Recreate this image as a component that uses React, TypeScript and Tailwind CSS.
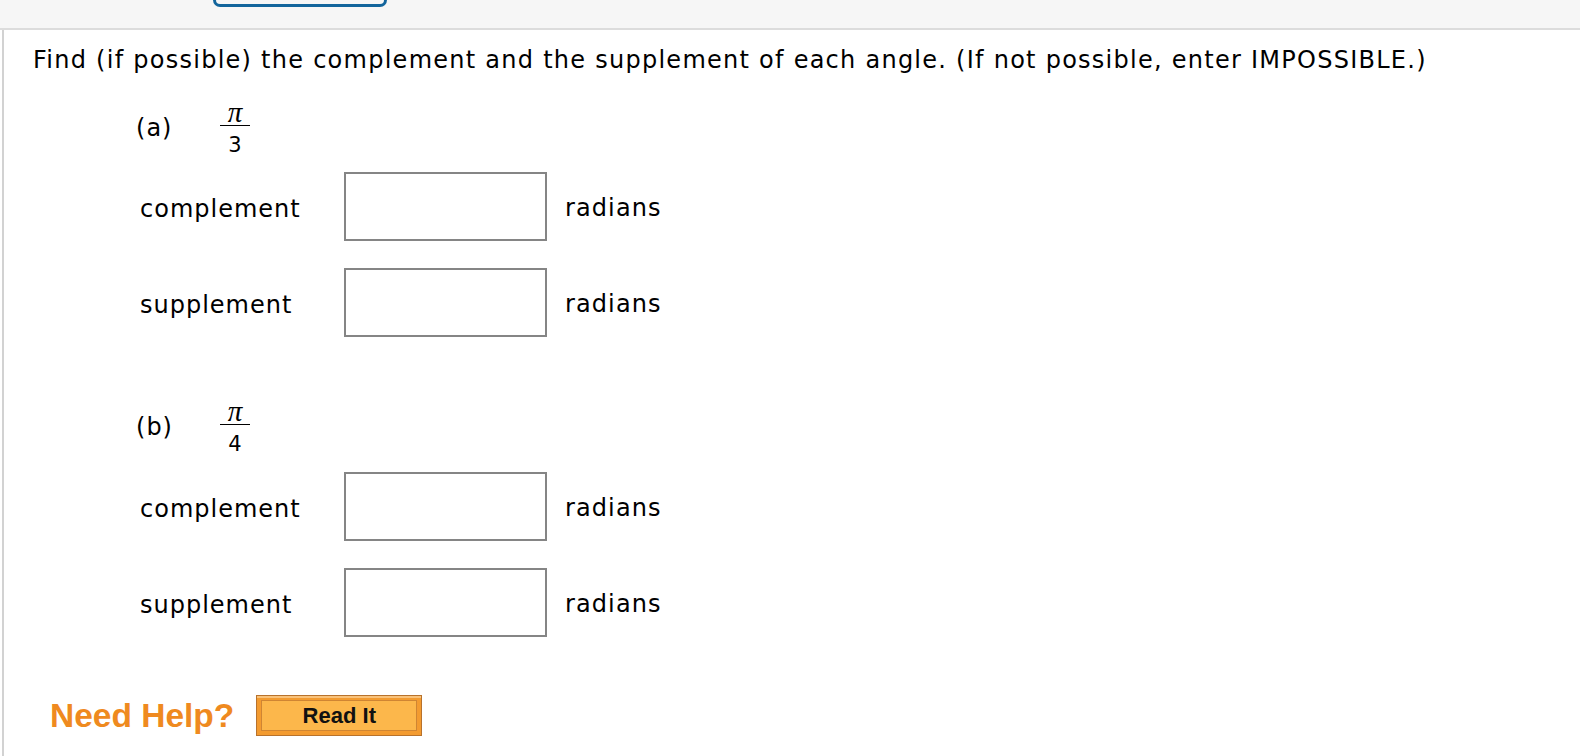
import React from "react";

const sans = { fontFamily: '"DejaVu Sans", Verdana, sans-serif' };

function Fraction({ d }: { d: string }) {
  return (
    <div className="flex flex-col items-center w-[30px]">
      <div
        className="text-[29px] leading-[24px] italic text-black pb-[1px] w-full text-center border-b-[1.5px] border-black"
        style={{ fontFamily: '"Liberation Serif", "Times New Roman", serif' }}
      >
        π
      </div>
      <div className="text-[21px] leading-[20px] pt-[9px] text-black">{d}</div>
    </div>
  );
}

function Row({ label }: { label: string }) {
  return (
    <div className="flex items-center h-[69px]">
      <div className="w-[204px] pl-[107px] box-content text-[24px] leading-[29px] tracking-[1px] pt-[6px] text-black">
        {label}
      </div>
      <div className="w-[203px] h-[69px] border-2 border-[#858585] bg-white" />
      <div className="ml-[18px] text-[24px] leading-[29px] tracking-[1.1px] pt-[3px] text-black">radians</div>
    </div>
  );
}

function Part({ letter, d, gap }: { letter: string; d: string; gap: string }) {
  return (
    <div>
      <div className="flex items-center h-[50px] pl-[103px]">
        <div className="text-[24px] leading-[29px] tracking-[1px] w-[84px] pt-[2px] text-black">({letter})</div>
        <Fraction d={d} />
      </div>
      <div className={gap}>
        <Row label="complement" />
      </div>
      <div className="mt-[27px]">
        <Row label="supplement" />
      </div>
    </div>
  );
}

export default function App() {
  return (
    <div className="w-[1580px] h-[756px] bg-white overflow-hidden" style={sans}>
      <div className="h-[30px] bg-[#f6f6f6] border-b-2 border-[#dcdcdc] flex items-start">
        <div className="ml-[213px] w-[174px] h-[7px] border-[3px] border-t-0 border-[#13659c] rounded-b-[7px]" />
      </div>
      <div className="ml-[2px] border-l-2 border-[#d2d2d2] h-[726px] pl-[29px] pt-[16px]">
        <div className="text-[24px] leading-[29px] tracking-[1.26px] text-black whitespace-nowrap">
          Find (if possible) the complement and the supplement of each angle. (If not possible, enter IMPOSSIBLE.)
        </div>
        <div className="mt-[27px]">
          <Part letter="a" d="3" gap="mt-[20px]" />
        </div>
        <div className="mt-[64px]">
          <Part letter="b" d="4" gap="mt-[21px]" />
        </div>
        <div className="mt-[58px] flex items-center pl-[17px]">
          <div
            className="text-[33.5px] leading-[36px] font-bold text-[#ef8a1f]"
            style={{ fontFamily: '"Liberation Sans", Arial, sans-serif' }}
          >
            Need Help?
          </div>
          <div className="ml-[22px] w-[166px] h-[41px] border border-[#b8722c] bg-[#f39b30] p-[4px] shadow-[inset_0_2px_0_#f9c27a]">
            <div
              className="w-full h-full border border-[#cf8533] bg-[#fcb74b] flex items-center justify-center text-[22px] font-bold text-[#111]"
              style={{ fontFamily: '"Liberation Sans", Arial, sans-serif' }}
            >
              Read It
            </div>
          </div>
        </div>
      </div>
    </div>
  );
}
